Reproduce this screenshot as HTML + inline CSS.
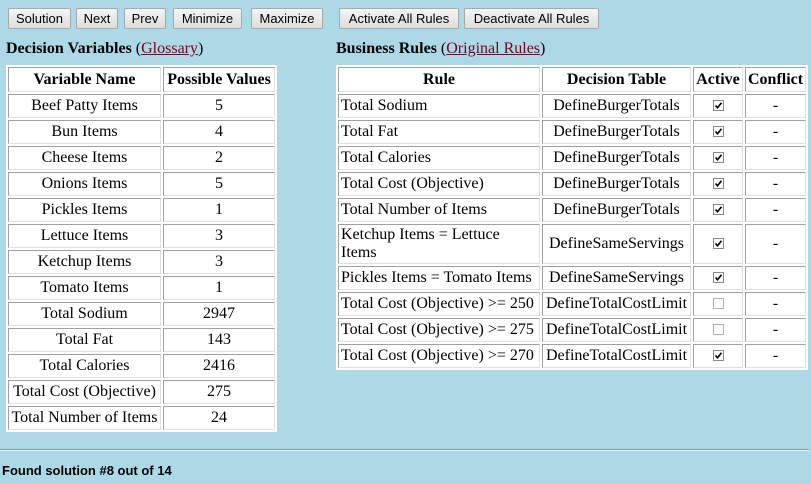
<!DOCTYPE html>
<html><head><style>
body{margin:0;background:#add8e6;width:811px;height:484px;overflow:hidden;position:relative;font-family:"Liberation Serif",serif;color:#000}
.b{position:absolute;top:8px;height:21px;box-sizing:border-box;border:1px solid #a8a8a8;border-radius:2px;background:linear-gradient(#f6f6f6,#dcdcdc);font:13px "Liberation Sans",sans-serif;text-align:center;line-height:19px}
h3{position:absolute;margin:0;font-size:16px;font-weight:bold;top:40px}
h3 span{font-weight:normal}
h3 a{color:#800020;text-decoration:underline;font-weight:normal}
table{position:absolute;top:65px;background:#fff;border-collapse:separate;border-spacing:2px;font-size:16px;table-layout:fixed}
td,th{border:1px solid #a0a0a0;border-right-color:#e0e0e0;border-bottom-color:#e0e0e0;padding:0 2px;height:22px;text-align:center;white-space:nowrap;overflow:visible}
th{height:23px}
#R td.l{text-align:left}
.cb{display:inline-block;width:11px;height:11px;border:1px solid #8a8a8a;box-sizing:border-box;background:#fff;vertical-align:-1px;position:relative}
.cb svg{position:absolute;left:0;top:0}
hr{position:absolute;top:449px;left:0;width:809px;margin:0;border:0;border-top:1px solid #8c9ea5;border-bottom:1px solid #e8f4f8}
.f{position:absolute;top:463px;left:2px;font:bold 13px "Liberation Sans",sans-serif}
</style></head><body>
<div class="b" style="left:8px;width:63px">Solution</div>
<div class="b" style="left:76px;width:42px">Next</div>
<div class="b" style="left:124px;width:42px">Prev</div>
<div class="b" style="left:173px;width:69px">Minimize</div>
<div class="b" style="left:251px;width:72px">Maximize</div>
<div class="b" style="left:339px;width:120px">Activate All Rules</div>
<div class="b" style="left:464px;width:135px">Deactivate All Rules</div>
<h3 style="left:6px">Decision Variables <span>(<a>Glossary</a>)</span></h3>
<h3 style="left:336px">Business Rules <span>(<a>Original Rules</a>)</span></h3>
<table id="L" style="left:6px;width:271px">
<colgroup><col style="width:153px"><col></colgroup>
<tr><th>Variable Name</th><th>Possible Values</th></tr>
<tr><td>Beef Patty Items</td><td>5</td></tr>
<tr><td>Bun Items</td><td>4</td></tr>
<tr><td>Cheese Items</td><td>2</td></tr>
<tr><td>Onions Items</td><td>5</td></tr>
<tr><td>Pickles Items</td><td>1</td></tr>
<tr><td>Lettuce Items</td><td>3</td></tr>
<tr><td>Ketchup Items</td><td>3</td></tr>
<tr><td>Tomato Items</td><td>1</td></tr>
<tr><td>Total Sodium</td><td>2947</td></tr>
<tr><td>Total Fat</td><td>143</td></tr>
<tr><td>Total Calories</td><td>2416</td></tr>
<tr><td>Total Cost (Objective)</td><td>275</td></tr>
<tr><td>Total Number of Items</td><td>24</td></tr>
</table>
<svg width="0" height="0" style="position:absolute"><defs><symbol id="k" viewBox="0 0 9 9"><path d="M1.5 4.5 L3.5 6.8 L7.5 1.8" stroke="#000" stroke-width="1.6" fill="none"/></symbol></defs></svg>
<table id="R" style="left:336px;width:472px">
<colgroup><col style="width:202px"><col style="width:149px"><col style="width:50px"><col></colgroup>
<tr><th>Rule</th><th>Decision Table</th><th>Active</th><th>Conflict</th></tr>
<tr><td class="l">Total Sodium</td><td>DefineBurgerTotals</td><td><span class="cb"><svg width="9" height="9"><use href="#k"/></svg></span></td><td>-</td></tr>
<tr><td class="l">Total Fat</td><td>DefineBurgerTotals</td><td><span class="cb"><svg width="9" height="9"><use href="#k"/></svg></span></td><td>-</td></tr>
<tr><td class="l">Total Calories</td><td>DefineBurgerTotals</td><td><span class="cb"><svg width="9" height="9"><use href="#k"/></svg></span></td><td>-</td></tr>
<tr><td class="l">Total Cost (Objective)</td><td>DefineBurgerTotals</td><td><span class="cb"><svg width="9" height="9"><use href="#k"/></svg></span></td><td>-</td></tr>
<tr><td class="l">Total Number of Items</td><td>DefineBurgerTotals</td><td><span class="cb"><svg width="9" height="9"><use href="#k"/></svg></span></td><td>-</td></tr>
<tr><td class="l" style="height:38px;line-height:18px">Ketchup Items = Lettuce<br>Items</td><td>DefineSameServings</td><td><span class="cb"><svg width="9" height="9"><use href="#k"/></svg></span></td><td>-</td></tr>
<tr><td class="l">Pickles Items = Tomato Items</td><td>DefineSameServings</td><td><span class="cb"><svg width="9" height="9"><use href="#k"/></svg></span></td><td>-</td></tr>
<tr><td class="l">Total Cost (Objective) &gt;= 250</td><td>DefineTotalCostLimit</td><td><span class="cb" style="border-color:#b0b0b0"></span></td><td>-</td></tr>
<tr><td class="l">Total Cost (Objective) &gt;= 275</td><td>DefineTotalCostLimit</td><td><span class="cb" style="border-color:#b0b0b0"></span></td><td>-</td></tr>
<tr><td class="l">Total Cost (Objective) &gt;= 270</td><td>DefineTotalCostLimit</td><td><span class="cb"><svg width="9" height="9"><use href="#k"/></svg></span></td><td>-</td></tr>
</table>
<hr>
<div class="f">Found solution #8 out of 14</div>
</body></html>
